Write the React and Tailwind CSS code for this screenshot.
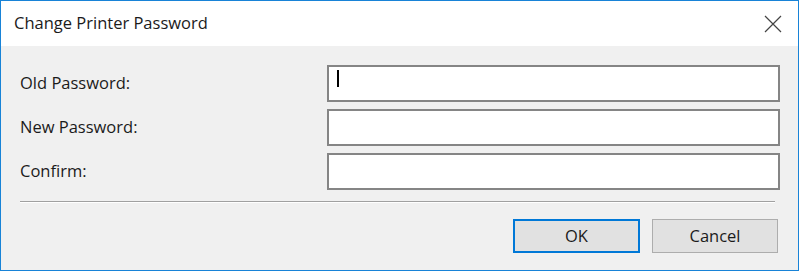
export default function App() {
  const fields = [
    { label: "Old Password:", focused: true },
    { label: "New Password:" },
    { label: "Confirm:" },
  ];

  return (
    <div className="h-[272px] w-[800px] bg-white font-['Open_Sans','Noto_Sans',sans-serif] text-[16.5px] text-[#1b1b1b]">
      <div className="flex h-[271px] w-[799px] flex-col border border-[#1883d7]">
        {/* title bar */}
        <div className="flex h-[45px] shrink-0 items-center justify-between bg-white pl-[13px] pr-[16px]">
          <span>Change Printer Password</span>
          <svg width="18" height="18" viewBox="0 0 18 18" className="text-[#444]">
            <path d="M1 1L17 17M17 1L1 17" stroke="currentColor" strokeWidth="1.2" fill="none" />
          </svg>
        </div>

        {/* body */}
        <div className="flex flex-1 flex-col bg-[#f0f0f0] pl-[19px] pr-[18px] pt-[19px]">
          <div className="flex flex-col gap-[7px]">
            {fields.map((f) => (
              <div key={f.label} className="flex items-center">
                <span className="w-[307px]">{f.label}</span>
                <div className="relative h-[37px] w-[453px] border-2 border-[#858585] bg-white">
                  {f.focused ? (
                    <span className="absolute left-[8px] top-[3px] h-[17px] w-[2px] bg-black" />
                  ) : null}
                </div>
              </div>
            ))}
          </div>

          <div className="mt-[11px] mr-[5px] h-[2px] border-t border-b border-t-[#a0a0a0] border-b-white" />

          <div className="mt-[16px] mr-[2px] flex justify-end gap-[12px]">
            <button
              type="button"
              className="h-[34px] w-[127px] border-2 border-[#0078d7] bg-[#e1e1e1]"
            >
              OK
            </button>
            <button
              type="button"
              className="h-[34px] w-[126px] border border-[#adadad] bg-[#e1e1e1]"
            >
              Cancel
            </button>
          </div>
        </div>
      </div>
    </div>
  );
}
